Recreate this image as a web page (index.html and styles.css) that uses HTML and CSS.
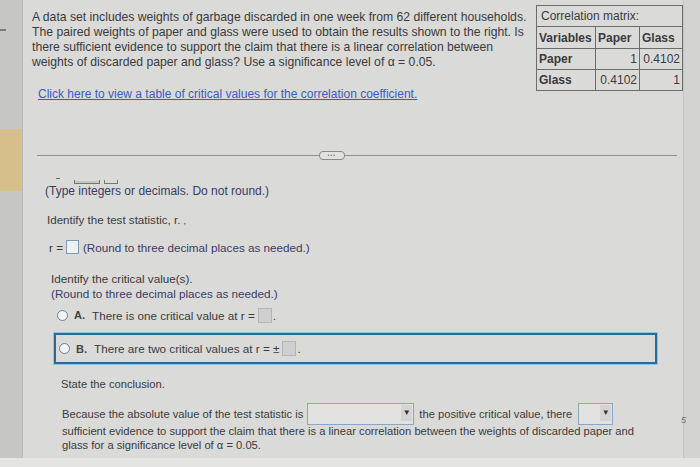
FILE: index.html
```html
<!DOCTYPE html>
<html>
<head>
<meta charset="utf-8">
<link rel="stylesheet" href="styles.css">
</head>
<body>
<div class="screen">
  <div class="left-strip">
    <div class="tick"></div>
    <div class="tan"></div>
  </div>
  <div class="main">
    <div class="top">
      <div class="intro">
        <p class="question">A data set includes weights of garbage discarded in one week from 62 different households. The paired weights of paper and glass were used to obtain the results shown to the right. Is there sufficient evidence to support the claim that there is a linear correlation between weights of discarded paper and glass? Use a significance level of α = 0.05.</p>
        <a class="link" href="#">Click here to view a table of critical values for the correlation coefficient.</a>
      </div>
      <table class="matrix">
        <tr><td colspan="3" class="title">Correlation matrix:</td></tr>
        <tr class="head"><td>Variables</td><td>Paper</td><td>Glass</td></tr>
        <tr><td class="bold">Paper</td><td class="num">1</td><td class="num">0.4102</td></tr>
        <tr><td class="bold">Glass</td><td class="num">0.4102</td><td class="num">1</td></tr>
      </table>
    </div>
    <div class="divider">
      <div class="rule"></div>
      <div class="pill">•••</div>
      <div class="rule"></div>
    </div>
    <div class="frag">
      <span class="dash"></span>
      <span class="brk wide"></span>
      <span class="brk"></span>
    </div>
    <p class="hint l1">(Type integers or decimals. Do not round.)</p>
    <p class="line l2">Identify the test statistic, r.<span class="mark">,</span></p>
    <div class="row l3">
      <span>r =</span><span class="input"></span><span class="hint">(Round to three decimal places as needed.)</span>
    </div>
    <p class="line l4">Identify the critical value(s).<br><span class="hint">(Round to three decimal places as needed.)</span></p>
    <div class="option opt-a">
      <span class="radio"></span><b>A.</b><span>There is one critical value at r =</span><span class="input filled"></span><span>.</span>
    </div>
    <div class="option opt-b">
      <span class="radio"></span><b>B.</b><span>There are two critical values at r = ±</span><span class="input filled"></span><span>.</span>
    </div>
    <p class="line l5">State the conclusion.</p>
    <div class="row l6">
      <span>Because the absolute value of the test statistic is</span>
      <span class="select big"><span class="arrow">▼</span></span>
      <span>the positive critical value, there</span>
      <span class="select small"><span class="arrow">▼</span></span>
    </div>
    <p class="line l7">sufficient evidence to support the claim that there is a linear correlation between the weights of discarded paper and<br>glass for a significance level of α = 0.05.</p>
  </div>
  <div class="right-strip">
    <span class="five">5</span>
  </div>
</div>
<div class="bottom"></div>
</body>
</html>
```
FILE: styles.css
```css
html, body {
  margin: 0;
  padding: 0;
  width: 700px;
  height: 467px;
  overflow: hidden;
  background: #d8d8d6;
  font-family: "Liberation Sans", Arial, sans-serif;
  font-size: 12px;
  color: #3a3a3c;
}
.screen {
  display: flex;
  height: 458px;
}
.left-strip {
  width: 22px;
  flex: none;
  background: #c6c6c4;
  border-right: 1px solid #b8b8b6;
  display: flex;
  flex-direction: column;
}
.tick {
  width: 6px;
  height: 2px;
  background: #7a7a7a;
  margin-top: 29px;
}
.tan {
  width: 22px;
  height: 62px;
  margin-top: 98px;
  background: #d7bf8b;
}
.main {
  flex: 1;
  background: #dadad8;
  padding-left: 9px;
  display: flex;
  flex-direction: column;
}
.main > * { flex: none; }
.right-strip {
  width: 16px;
  flex: none;
  background: #d3d3d1;
  border-left: 1px solid #c4c4c2;
  position: relative;
}
.five {
  position: absolute;
  left: -3px;
  top: 415px;
  font-size: 9px;
  font-style: italic;
  color: #6a6a6a;
}
.bottom {
  height: 9px;
  background: #e4e4e2;
}
p { margin: 0; }
.top {
  display: flex;
  justify-content: space-between;
  align-items: flex-start;
}
.intro {
  width: 500px;
  display: flex;
  flex-direction: column;
  align-items: flex-start;
}
.question {
  line-height: 15px;
  margin-top: 10px;
  font-size: 12.2px;
}
.matrix {
  border-collapse: collapse;
  margin-top: 5px;
  margin-right: 0;
  font-size: 12px;
  color: #3a3a3c;
}
.matrix td {
  border: 1px solid #6c6c6c;
  height: 20px;
  padding: 0 2px;
}
.matrix .title { height: 20px; padding-left: 4px; }
.matrix .head td { font-weight: bold; height: 21px; }
.matrix .head td:first-child { width: 54px; }
.matrix .head td:nth-child(2) { width: 39px; }
.matrix .head td:nth-child(3) { width: 38px; }
.matrix .bold { font-weight: bold; }
.matrix .num { text-align: right; }
.link {
  color: #3b5cc4;
  text-decoration: underline;
  margin-top: 17px;
  margin-left: 6px;
  line-height: 15px;
  font-size: 12px;
}
.divider {
  display: flex;
  align-items: center;
  margin-top: 47px;
  margin-left: 5px;
  margin-right: 6px;
  height: 12px;
}
.rule {
  flex: 1;
  height: 1px;
  background: #8f8f8f;
}
.rule:first-child { flex: none; width: 282px; }
.pill {
  width: 24px;
  height: 7px;
  border: 1px solid #8a8a8a;
  border-radius: 4px;
  font-size: 5px;
  line-height: 7px;
  text-align: center;
  color: #777;
  letter-spacing: 1px;
  background: #e2e2e0;
}
.frag {
  display: flex;
  align-items: flex-end;
  height: 6px;
  margin-top: 17px;
  margin-left: 24px;
}
.dash {
  width: 4px;
  height: 1px;
  background: #666;
  align-self: flex-start;
  margin-right: 14px;
}
.brk {
  width: 12px;
  height: 3px;
  border: 1px solid #777;
  border-top: none;
  margin-right: 4px;
}
.brk.wide { width: 24px; background: linear-gradient(#dadad8 0 1px, #c4c4c4 1px); }
.hint { color: #3a3a66; }
.line { line-height: 15px; }
.l1 { margin-top: 0; margin-left: 13px; line-height: 15px; }
.l2 { margin-top: 13px; margin-left: 15px; font-size: 11.6px; }
.mark { font-size: 9px; margin-left: 3px; }
.row {
  display: flex;
  align-items: center;
}
.l3 { margin-top: 10px; margin-left: 17px; height: 16px; font-size: 11.7px; }
.input {
  display: inline-block;
  width: 11px;
  height: 12px;
  border: 1px solid #7d97b7;
  background: #f0f0ee;
  margin: 0 4px 0 3px;
}
.input.filled { background: #cfcfcf; border-color: #b5b5b5; width: 12px; height: 13px; margin: 0 1px 0 3px; }
.l4 { margin-top: 16px; margin-left: 19px; font-size: 11.7px; }
.option {
  display: flex;
  align-items: center;
  font-size: 11.7px;
}
.option b { font-size: 11px; color: #444; margin: 0 7px 0 6px; }
.radio {
  width: 9px;
  height: 9px;
  border: 1px solid #5f82ad;
  border-radius: 50%;
  background: #f4f4f2;
}
.opt-a { margin-top: 6px; margin-left: 25px; height: 16px; }
.opt-b {
  margin-top: 10px;
  margin-left: 22px;
  width: 596px;
  height: 27px;
  border: 2px solid #2b6a96;
  box-shadow: 0 0 0 1px #8fc6e4;
  padding-left: 3px;
}
.l5 { margin-top: 13px; margin-left: 29px; font-size: 11.2px; }
.l6 { margin-top: 11px; margin-left: 30px; height: 22px; font-size: 11.2px; }
.select {
  display: inline-block;
  height: 20px;
  border: 1px solid #8aa6c6;
  background: #e2e2e0;
  position: relative;
  margin: 0 5px;
}
.select.big { width: 105px; margin-left: 4px; }
.select.small { width: 33px; margin-left: 6px; }
.arrow {
  position: absolute;
  right: 1px;
  top: 1px;
  width: 11px;
  height: 16px;
  background: #d4d4d4;
  font-size: 8px;
  line-height: 16px;
  text-align: center;
  color: #333;
}
.l7 { margin-top: 0; margin-left: 30px; line-height: 13.5px; font-size: 11.2px; }
```
